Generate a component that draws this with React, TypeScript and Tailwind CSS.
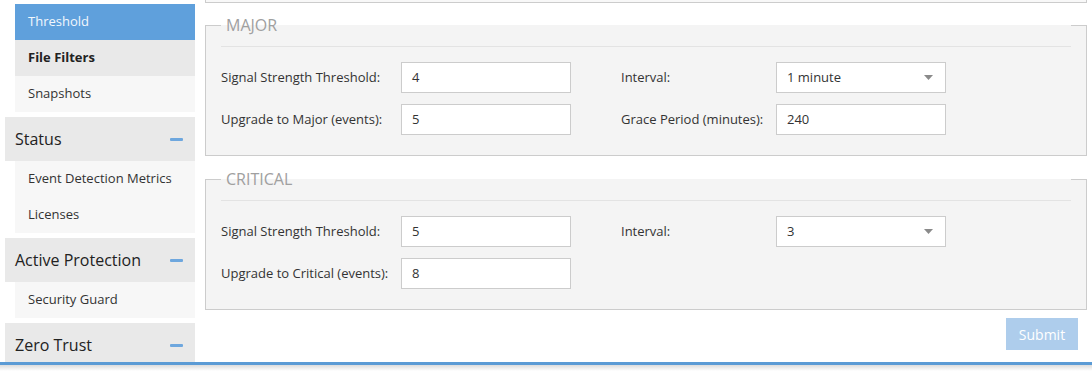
import React from "react";

type Row = {
  label: string;
  value: string;
  rightLabel?: string;
  rightValue?: string;
  rightSelect?: boolean;
};

const SubItem = ({
  label,
  active,
  bold,
}: {
  label: string;
  active?: boolean;
  bold?: boolean;
}) => (
  <div
    className={
      active
        ? "flex h-[36px] items-center bg-[#5fa0dc] pl-[13px] text-[13px] text-[#f2f7fc]"
        : bold
          ? "flex h-[36px] items-center bg-[#e9e9e9] pl-[13px] text-[13px] font-bold text-[#222]"
          : "flex h-[36px] items-center bg-[#f7f7f7] pl-[13px] text-[13px] text-[#333]"
    }
  >
    {label}
  </div>
);

const Group = ({ title, items }: { title: string; items: string[] }) => (
  <div className="mt-[5px] flex flex-col">
    <div className="flex h-[44px] shrink-0 items-center justify-between bg-[#e9e9e9] pl-[10px] pr-[12px] text-[16px] text-[#222]">
      <span>{title}</span>
      <span className="h-[3px] w-[13px] rounded-[1px] bg-[#6ea7de]" />
    </div>
    {items.length > 0 && (
      <div className="ml-[10px] flex flex-col">
        {items.map((item) => (
          <SubItem key={item} label={item} />
        ))}
      </div>
    )}
  </div>
);

const Field = ({ value }: { value: string }) => (
  <div className="flex h-[31px] w-[170px] items-center border border-[#ccc] bg-white px-[10px] text-[13px] text-[#333]">
    {value}
  </div>
);

const SelectBox = ({ value }: { value: string }) => (
  <div className="flex h-[31px] w-[170px] items-center justify-between border border-[#ccc] bg-white pl-[10px] pr-[12px] text-[13px] text-[#333]">
    <span>{value}</span>
    <svg width="9" height="5" viewBox="0 0 9 5">
      <polygon points="0,0 9,0 4.5,5" fill="#8a8a8a" />
    </svg>
  </div>
);

const Section = ({ title, rows, className }: { title: string; rows: Row[]; className: string }) => (
  <fieldset className={`border border-[#ccc] bg-[#f4f4f4] px-[15px] ${className}`}>
    <legend className="w-full border-b border-[#e3e3e3] pl-[5px] text-[16px] leading-[42px] text-[#a0a0a0]">
      {title}
    </legend>
    <div className="flex flex-col gap-[11px] pb-[20px] pt-[15px]">
      {rows.map((row) => (
        <div key={row.label} className="flex h-[31px] items-center text-[13px] text-[#333]">
          <span className="w-[180px]">{row.label}</span>
          <Field value={row.value} />
          {row.rightLabel && (
            <>
              <span className="ml-[50px] w-[155px]">{row.rightLabel}</span>
              {row.rightSelect ? (
                <SelectBox value={row.rightValue ?? ""} />
              ) : (
                <Field value={row.rightValue ?? ""} />
              )}
            </>
          )}
        </div>
      ))}
    </div>
  </fieldset>
);

export default function App() {
  return (
    <div className="h-[371px] w-[1092px] overflow-hidden bg-white font-['Open_Sans',sans-serif]">
      <div className="flex h-[362px] overflow-hidden">
        <aside className="ml-[5px] flex w-[190px] shrink-0 flex-col pt-[4px]">
          <div className="ml-[10px] flex flex-col">
            <SubItem label="Threshold" active />
            <SubItem label="File Filters" bold />
            <SubItem label="Snapshots" />
          </div>
          <Group title="Status" items={["Event Detection Metrics", "Licenses"]} />
          <Group title="Active Protection" items={["Security Guard"]} />
          <Group title="Zero Trust" items={[]} />
        </aside>

        <main className="ml-[10px] flex w-[882px] flex-col">
          <div className="h-[3px] border-x border-b border-[#ccc] bg-[#f8f8f8]" />
          <Section
            title="MAJOR"
            className="mt-[1px]"
            rows={[
              {
                label: "Signal Strength Threshold:",
                value: "4",
                rightLabel: "Interval:",
                rightValue: "1 minute",
                rightSelect: true,
              },
              {
                label: "Upgrade to Major (events):",
                value: "5",
                rightLabel: "Grace Period (minutes):",
                rightValue: "240",
              },
            ]}
          />
          <Section
            title="CRITICAL"
            className="mt-[2px]"
            rows={[
              {
                label: "Signal Strength Threshold:",
                value: "5",
                rightLabel: "Interval:",
                rightValue: "3",
                rightSelect: true,
              },
              { label: "Upgrade to Critical (events):", value: "8" },
            ]}
          />
          <div className="mt-[8px] flex justify-end pr-[9px]">
            <button className="h-[32px] w-[72px] bg-[#aecdec] text-[14px] text-white">
              Submit
            </button>
          </div>
        </main>
      </div>
      <div className="h-[3px] bg-[#5b9bd5]" />
      <div className="h-[6px] bg-gradient-to-b from-[#dcdcdc] to-white" />
    </div>
  );
}
